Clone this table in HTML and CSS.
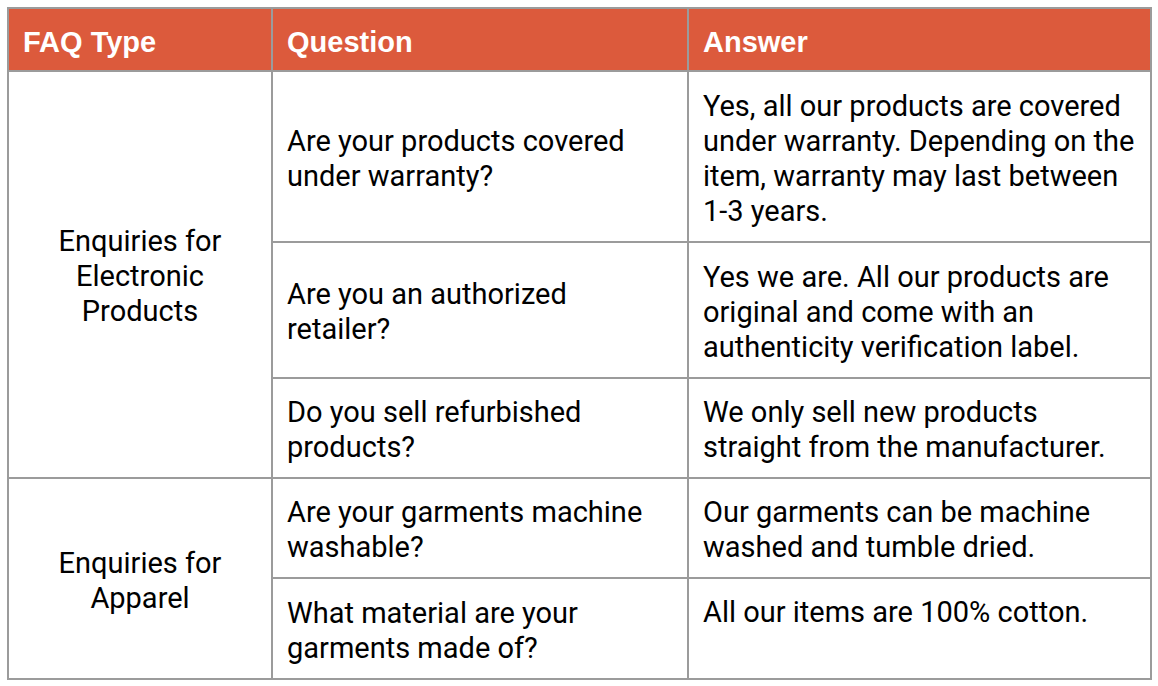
FILE: index.html
```html
<!DOCTYPE html>
<html>
<head>
<meta charset="utf-8">
<link rel="stylesheet" href="styles.css">
</head>
<body>
<table class="faq">
  <colgroup>
    <col class="c1"><col class="c2"><col class="c3">
  </colgroup>
  <thead>
    <tr class="r-head">
      <th>FAQ Type</th>
      <th>Question</th>
      <th>Answer</th>
    </tr>
  </thead>
  <tbody>
    <tr class="r1">
      <td class="type" rowspan="3">Enquiries for<br>Electronic<br>Products</td>
      <td>Are your products covered under warranty?</td>
      <td>Yes, all our products are covered under warranty. Depending on the item, warranty may last between 1-3 years.</td>
    </tr>
    <tr class="r2">
      <td>Are you an authorized retailer?</td>
      <td>Yes we are. All our products are original and come with an authenticity verification label.</td>
    </tr>
    <tr class="r3">
      <td>Do you sell refurbished products?</td>
      <td>We only sell new products straight from the manufacturer.</td>
    </tr>
    <tr class="r4">
      <td class="type" rowspan="2">Enquiries for<br>Apparel</td>
      <td>Are your garments machine washable?</td>
      <td>Our garments can be machine washed and tumble dried.</td>
    </tr>
    <tr class="r5">
      <td>What material are your garments made of?</td>
      <td class="top">All our items are 100% cotton.</td>
    </tr>
  </tbody>
</table>
</body>
</html>
```

FILE: styles.css
```css
html, body {
  margin: 0;
  padding: 0;
  background: #ffffff;
}
body {
  padding: 7px;
}
.faq {
  border-collapse: collapse;
  table-layout: fixed;
  width: 1145px;
  font-family: Roboto, "Liberation Sans", sans-serif;
  font-size: 29px;
  line-height: 35px;
  color: #000;
}
.c1 { width: 264px; }
.c2 { width: 416px; }
.c3 { width: 463px; }
.faq th, .faq td {
  border: 2px solid #9b9b9b;
  padding: 4px 14px 0 14px;
  vertical-align: middle;
  text-align: left;
}
.faq th {
  background: #dc5a3c;
  color: #ffffff;
  font-family: "Liberation Sans", Arial, sans-serif;
  font-weight: bold;
  font-size: 29px;
  padding-top: 5px;
}
.r-head { height: 63px; }
.r1 { height: 171px; }
.r2 { height: 136px; }
.r3 { height: 100px; }
.r4 { height: 100px; }
.r5 { height: 101px; }
.faq td.type {
  text-align: center;
}
.faq td.top {
  vertical-align: top;
  padding-top: 16px;
}
```
